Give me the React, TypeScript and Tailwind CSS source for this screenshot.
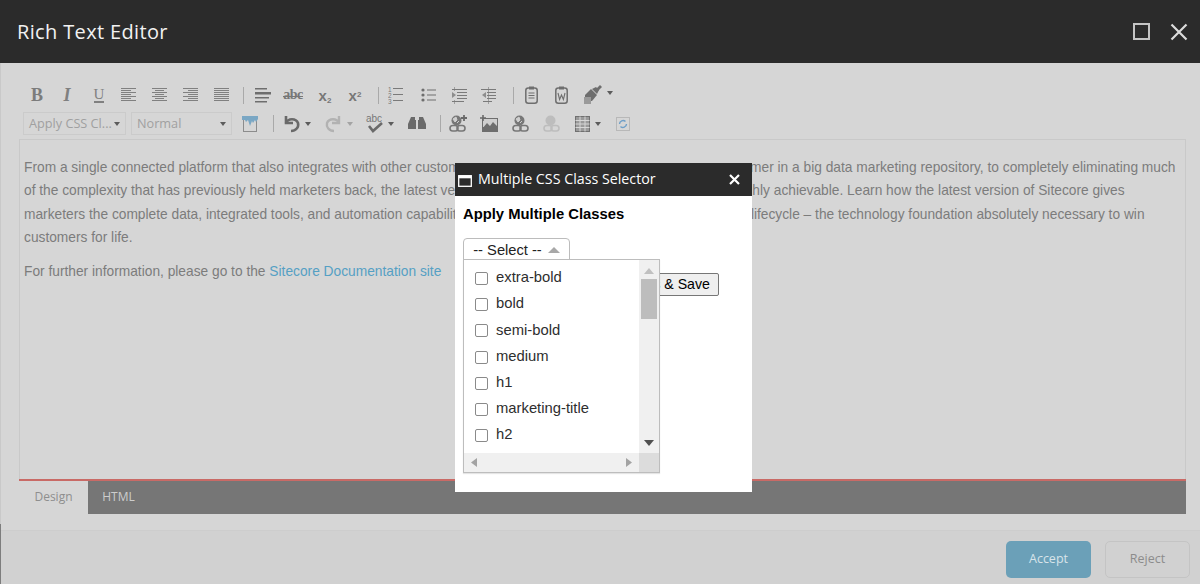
const body = "font-['Liberation_Sans',Arial,sans-serif]";

function Caret({ className = '' }: { className?: string }) {
  return (
    <svg width="6" height="4" viewBox="0 0 6 4" className={`shrink-0 ${className}`}>
      <path d="M0 0h6L3 4z" fill="#5c5c5c" />
    </svg>
  );
}

function Lines({ rows }: { rows: [number, number][] }) {
  return (
    <svg width="15" height="14" viewBox="0 0 15 14">
      {rows.map(([x, w], i) => (
        <rect key={i} x={x} y={i * 2} width={w} height="1" fill="#808080" />
      ))}
    </svg>
  );
}

function Sep({ className = '' }: { className?: string }) {
  return <span className={`h-[17px] w-px shrink-0 bg-[#a9a9a9] ${className}`} />;
}

function Btn({ className, children }: { className: string; children: React.ReactNode }) {
  return <span className={`flex h-[22px] shrink-0 items-center justify-center ${className}`}>{children}</span>;
}

const alignLeft: [number, number][] = [[0,15],[0,10],[0,15],[0,10],[0,15],[0,10],[0,15]];
const alignCenter: [number, number][] = [[0,15],[3,9],[0,15],[3,9],[0,15],[3,9],[0,15]];
const alignRight: [number, number][] = [[0,15],[5,10],[0,15],[5,10],[0,15],[5,10],[0,15]];
const justify: [number, number][] = [[0,15],[0,15],[0,15],[0,15],[0,15],[0,15],[0,15]];

function ToolbarTop() {
  return (
    <div className="flex h-[22px] items-center pl-[21px]">
      <Btn className="w-[30px]"><span className="font-['Liberation_Serif',serif] text-[18px] font-bold leading-none text-[#7c7c7c]">B</span></Btn>
      <Btn className="w-[30px]"><span className="font-['Liberation_Serif',serif] text-[18px] font-bold italic leading-none text-[#808080]">I</span></Btn>
      <Btn className="w-[34px]"><span className="border-b-2 border-[#808080] font-['Liberation_Serif',serif] text-[15px] leading-[14px] text-[#808080]">U</span></Btn>
      <Btn className="w-[24px]"><Lines rows={alignLeft} /></Btn>
      <Btn className="w-[38px]"><Lines rows={alignCenter} /></Btn>
      <Btn className="w-[24px]"><Lines rows={alignRight} /></Btn>
      <Btn className="w-[38px]"><Lines rows={justify} /></Btn>
      <Sep className="ml-[3px]" />
      <Btn className="ml-[3px] w-[32px]">
        <svg width="16" height="16" viewBox="0 0 16 16" fill="#6e6e6e">
          <rect x="0" y="1" width="12" height="1.5" />
          <rect x="0" y="5" width="16" height="2.5" />
          <rect x="0" y="10" width="14" height="1.5" />
          <rect x="0" y="14" width="12" height="1.5" />
        </svg>
      </Btn>
      <Btn className="w-[28px]">
        <span className="relative font-['Liberation_Serif',serif] text-[14px] font-bold leading-none tracking-[-0.5px] text-[#777]">
          abc
          <span className="absolute left-0 right-0 top-[8px] h-px bg-[#777]" />
        </span>
      </Btn>
      <Btn className="w-[36px]">
        <span className={`${body} text-[15px] font-bold leading-none text-[#777]`}>x<sub className="text-[8px]">2</sub></span>
      </Btn>
      <Btn className="w-[24px]">
        <span className={`${body} text-[15px] font-bold leading-none text-[#777]`}>x<sup className="text-[8px]">2</sup></span>
      </Btn>
      <Sep className="ml-[11px]" />
      <Btn className="w-[34px]">
        <svg width="16" height="18" viewBox="0 0 16 18" fill="#7a7a7a">
          <text x="0" y="6" fontSize="6.5" fontFamily="Liberation Sans">1</text>
          <text x="0" y="12" fontSize="6.5" fontFamily="Liberation Sans">2</text>
          <text x="0" y="18" fontSize="6.5" fontFamily="Liberation Sans">3</text>
          <rect x="5" y="2" width="10" height="1" />
          <rect x="5" y="8" width="10" height="1" />
          <rect x="5" y="14" width="10" height="1" />
        </svg>
      </Btn>
      <Btn className="w-[30px]">
        <svg width="15" height="14" viewBox="0 0 15 14" fill="#6e6e6e">
          <circle cx="2" cy="2" r="1.6" />
          <circle cx="2" cy="7" r="1.6" />
          <circle cx="2" cy="12" r="1.6" />
          <rect x="6" y="1.5" width="9" height="1" />
          <rect x="6" y="6.5" width="9" height="1" />
          <rect x="6" y="11.5" width="9" height="1" />
        </svg>
      </Btn>
      <Btn className="w-[32px]">
        <svg width="16" height="17" viewBox="0 0 16 17" fill="#7a7a7a">
          <path d="M1 5l4 3-4 3z" opacity="0.8" />
          <rect x="3" y="0" width="1" height="4" opacity="0.6" />
          <rect x="3" y="13" width="1" height="4" opacity="0.6" />
          <rect x="1" y="2" width="15" height="1" />
          <rect x="6" y="5" width="10" height="1" />
          <rect x="6" y="8" width="10" height="1" />
          <rect x="6" y="11" width="10" height="1" />
          <rect x="1" y="14" width="12" height="1" />
        </svg>
      </Btn>
      <Btn className="w-[28px]">
        <svg width="16" height="17" viewBox="0 0 16 17" fill="#7a7a7a">
          <path d="M5 5L1 8l4 3z" opacity="0.8" />
          <rect x="7" y="0" width="1" height="17" opacity="0.6" />
          <rect x="0" y="2" width="15" height="1" />
          <rect x="6" y="5" width="9" height="1" />
          <rect x="6" y="8" width="9" height="1" />
          <rect x="6" y="11" width="9" height="1" />
          <rect x="2" y="14" width="9" height="1" />
        </svg>
      </Btn>
      <Sep className="ml-[10px]" />
      <Btn className="w-[34px]">
        <svg width="13" height="18" viewBox="0 0 13 18" fill="none" stroke="#6e6e6e">
          <rect x="0.8" y="2" width="11.4" height="15.2" rx="2.5" strokeWidth="1.5" />
          <rect x="4" y="0.5" width="5" height="3" fill="#6e6e6e" stroke="none" />
          <path d="M3.5 7h6M3.5 9.5h6M3.5 12h6" strokeWidth="1" />
        </svg>
      </Btn>
      <Btn className="w-[26px]">
        <svg width="13" height="18" viewBox="0 0 13 18" fill="none" stroke="#6e6e6e">
          <rect x="0.8" y="2" width="11.4" height="15.2" rx="2.5" strokeWidth="1.5" />
          <rect x="4" y="0.5" width="5" height="3" fill="#6e6e6e" stroke="none" />
          <path d="M3 7l1.6 6.5L6.5 9l1.9 4.5L10 7" strokeWidth="1.1" />
        </svg>
      </Btn>
      <span className="ml-[7px] flex items-center">
        <svg width="22" height="20" viewBox="0 0 22 20" className="shrink-0">
          <path d="M4 10l6-6 6 6-5 6H4z" fill="#6e6e6e" />
          <path d="M11 4l4-2 3 3-2 4z" fill="#6e6e6e" />
          <path d="M15 4l4-4 2 2-4 4z" fill="#6e6e6e" />
          <path d="M3 12h7v7H3z" fill="#9a9a9a" />
        </svg>
        <Caret className="-mt-1 ml-[4px]" />
      </span>
    </div>
  );
}

function Combo({ className, label }: { className: string; label: string }) {
  return (
    <span className={`flex h-[23px] shrink-0 items-center justify-between border border-[#cbcbcb] pl-[5px] pr-[5px] font-['Open_Sans',sans-serif] text-[12.7px] text-[#a0a0a0] ${className}`}>
      <span className="whitespace-nowrap">{label}</span>
      <Caret />
    </span>
  );
}

function Globe({ color, accent }: { color: string; accent?: boolean }) {
  return (
    <>
      <circle cx="7.5" cy="5.5" r="5" fill={color} />
      {accent && <path d="M4 4l3-2 1 3-2 2zM8 8l2-2" fill="#cfcfcf" stroke="#cfcfcf" />}
      <rect x="1" y="10.5" width="8" height="5.5" rx="2.7" fill="#d6d6d6" stroke={color} strokeWidth="1.6" />
      <rect x="8" y="10.5" width="8" height="5.5" rx="2.7" fill="none" stroke={color} strokeWidth="1.6" />
    </>
  );
}

function ToolbarBottom() {
  return (
    <div className="mt-[6px] flex h-[23px] items-center pl-[22px]">
      <Combo className="w-[103px]" label="Apply CSS Cl..." />
      <Combo className="ml-[5px] w-[101px]" label="Normal" />
      <Btn className="w-[36px]">
        <svg width="16" height="16" viewBox="0 0 16 16">
          <rect x="1.5" y="2.5" width="13" height="13" fill="none" stroke="#8c8c8c" />
          <path d="M0 0h16v3l-2 3-1-2-2 3-1-2-2 5-2-6-2 2-1-2-3 0z" fill="#7aa7c4" />
        </svg>
      </Btn>
      <Sep className="ml-[5px]" />
      <svg width="18" height="18" viewBox="0 0 18 18" fill="none" stroke="#6a6a6a" strokeWidth="2.6" className="ml-[9px] shrink-0">
        <path d="M3 1v7h7" />
        <path d="M3 8c2-5 10-5 12 0 1 4-2 8-7 8" />
      </svg>
      <Caret className="ml-[4px]" />
      <svg width="18" height="18" viewBox="0 0 18 18" fill="none" stroke="#b2b2b2" strokeWidth="2.4" className="ml-[13px] shrink-0">
        <path d="M15 1v7H8" />
        <path d="M15 8C13 3 5 3 3 8c-1 4 2 8 7 8" />
      </svg>
      <Caret className="ml-[5px] opacity-40" />
      <svg width="20" height="20" viewBox="0 0 20 20" className="ml-[12px] shrink-0">
        <text x="1" y="8" fontSize="10" fontFamily="Liberation Sans" fill="#777">abc</text>
        <path d="M4 12l4 5 9-8" fill="none" stroke="#6a6a6a" strokeWidth="2.6" />
      </svg>
      <Caret className="ml-[3px]" />
      <svg width="18" height="15" viewBox="0 0 18 15" fill="#6a6a6a" className="ml-[14px] shrink-0">
        <path d="M3 1h4v3h1v9H0V8z" />
        <path d="M15 1h-4v3h-1v9h8V8z" />
      </svg>
      <Sep className="ml-[14px]" />
      <svg width="18" height="18" viewBox="0 0 18 18" className="ml-[8px] shrink-0">
        <Globe color="#777" accent />
        <path d="M12 3h6M15 0v6" stroke="#6a6a6a" strokeWidth="1.8" />
      </svg>
      <svg width="18" height="17" viewBox="0 0 18 17" className="ml-[13px] shrink-0">
        <rect x="2" y="3" width="16" height="14" fill="#6e6e6e" />
        <rect x="3" y="4" width="14" height="8" fill="#cfcfcf" />
        <path d="M2 14l5-6 3 3 3-4 5 5v5H2z" fill="#6e6e6e" />
        <path d="M0 3h6M3 0v6" stroke="#6a6a6a" strokeWidth="1.6" />
      </svg>
      <svg width="18" height="18" viewBox="0 0 18 18" className="ml-[14px] shrink-0">
        <Globe color="#777" accent />
      </svg>
      <svg width="18" height="18" viewBox="0 0 18 18" className="ml-[13px] shrink-0">
        <Globe color="#bdbdbd" />
      </svg>
      <svg width="15" height="16" viewBox="0 0 15 16" fill="none" stroke="#707070" className="ml-[14px] shrink-0">
        <rect x="0.5" y="0.5" width="14" height="15" fill="#9a9a9a" />
        <path d="M.5 4.5h14M.5 8h14M.5 11.5h14M5 .5v15M10 .5v15" stroke="#d6d6d6" />
      </svg>
      <Caret className="ml-[5px]" />
      <svg width="14" height="14" viewBox="0 0 14 14" fill="none" className="ml-[15px] shrink-0">
        <rect x="0.5" y="0.5" width="13" height="13" stroke="#9a9a9a" strokeDasharray="1 1" />
        <path d="M3.5 7a3.5 3.5 0 0 1 6-2.4M10.5 7a3.5 3.5 0 0 1-6 2.4" stroke="#6f9fc8" strokeWidth="1.4" />
      </svg>
    </div>
  );
}

const options = ['extra-bold', 'bold', 'semi-bold', 'medium', 'h1', 'marketing-title', 'h2'];

function ClassDialog() {
  return (
    <div className={`absolute left-[455px] top-[163px] h-[329px] w-[297px] bg-white shadow-[0_-3px_0_#d6d6d6] ${body}`}>
      <div className="flex h-[33px] items-center bg-[#2b2b2b] pb-[1px] pl-[3px] pr-[12px] text-white">
        <svg width="14" height="12" viewBox="0 0 14 12" className="mt-[3px] shrink-0" fill="none">
          <rect x="0.7" y="0.7" width="12.6" height="10.6" stroke="white" strokeWidth="1.3" />
          <rect x="0.7" y="0.7" width="12.6" height="2.6" fill="white" />
        </svg>
        <span className="ml-[6px] flex-1 font-['Open_Sans',sans-serif] text-[14.25px]">Multiple CSS Class Selector</span>
        <svg width="11" height="11" viewBox="0 0 11 11" stroke="white" strokeWidth="2.2">
          <path d="M1 1l9 9M10 1l-9 9" />
        </svg>
      </div>
      <p className="mt-[9px] pl-[8px] text-[14.8px] font-bold leading-[18px] text-black">Apply Multiple Classes</p>
      <div className="relative mt-[15px] pl-[8px]">
        <div className="flex h-[23px] w-[107px] items-start justify-center gap-[6px] rounded-t-[4px] border border-[#bcbcbc] pt-[1px] text-[14.7px] leading-[20px] text-[#222]">
          -- Select --
          <svg width="12" height="6" viewBox="0 0 12 6" className="mt-[7px]">
            <path d="M0 6L6 0l6 6z" fill="#a8a8a8" />
          </svg>
        </div>
        <button className="absolute left-[187px] top-[35px] flex h-[23px] w-[77px] justify-end whitespace-nowrap rounded-[2px] border border-[#767676] bg-[#efefef] pr-[8px] text-[14.2px] leading-[20px] text-black">
          Options &amp; Save
        </button>
        <div className="absolute left-[8px] top-[21px] flex h-[214px] w-[197px] flex-col border border-[#bdbdbd] bg-white shadow-[0_1px_1px_rgba(0,0,0,0.1)]">
          <div className="flex min-h-0 flex-1">
            <ul className="flex-1 pl-[11px] pt-[5px]">
              {options.map((o) => (
                <li key={o} className="flex h-[26.2px] items-center text-[14.8px] leading-none text-[#2e2e2e]">
                  <span className="mt-[1px] h-[13px] w-[13px] rounded-[2px] border border-[#8a8a8a] bg-white" />
                  <span className="-mt-[1px] ml-[8px]">{o}</span>
                </li>
              ))}
            </ul>
            <div className="flex w-[20px] flex-col items-center bg-[#f0f0f0]">
              <svg width="10" height="6" viewBox="0 0 10 6" className="mt-[8px]"><path d="M0 6l5-6 5 6z" fill="#c0c0c0" /></svg>
              <div className="mt-[5px] h-[40px] w-[16px] bg-[#bdbdbd]" />
              <svg width="10" height="6" viewBox="0 0 10 6" className="mb-[7px] mt-auto"><path d="M0 0l5 6 5-6z" fill="#505050" /></svg>
            </div>
          </div>
          <div className="flex h-[19px]">
            <div className="flex flex-1 items-center justify-between bg-[#f0f0f0] px-[7px]">
              <svg width="6" height="9" viewBox="0 0 6 9"><path d="M6 0L0 4.5 6 9z" fill="#a3a3a3" /></svg>
              <svg width="6" height="9" viewBox="0 0 6 9"><path d="M0 0l6 4.5L0 9z" fill="#a3a3a3" /></svg>
            </div>
            <div className="w-[20px] bg-[#dcdcdc]" />
          </div>
        </div>
      </div>
    </div>
  );
}

export default function App() {
  return (
    <div className="relative flex h-[584px] w-[1200px] flex-col overflow-hidden bg-[#d6d6d6]">
      <header className="flex h-[63px] shrink-0 items-center bg-[#2b2b2b] pl-[17px] pr-[12px] text-white">
        <h1 className="flex-1 font-['Open_Sans',sans-serif] text-[20px] font-normal tracking-[0.35px] text-[#f2f2f2]">Rich Text Editor</h1>
        <span className="h-[17px] w-[17px] border-2 border-[#c4c4c4]" />
        <svg width="18" height="18" viewBox="0 0 18 18" className="ml-[20px]" stroke="#dcdcdc" strokeWidth="2.2">
          <path d="M1.5 1.5l15 15M16.5 1.5l-15 15" />
        </svg>
      </header>
      <main className="flex flex-1 flex-col border-l border-[#c9c9c9] pt-[21px]">
        <ToolbarTop />
        <ToolbarBottom />
        <div className="ml-[18px] mr-[14px] mt-[4px] h-[340px] border border-b-0 border-[#c9c9c9] px-[4px] pt-[16px]">
          <div className={`${body} text-[13.76px] leading-[23.4px] text-[#7c7c7c]`}>
            <p className="whitespace-nowrap">
              From a single connected platform that also integrates with other customer-facing platforms, to a single view of the customer in a big data marketing repository, to completely eliminating much<br />
              of the complexity that has previously held marketers back, the latest version of Sitecore makes customer experience highly achievable. Learn how the latest version of Sitecore gives<br />
              marketers the complete data, integrated tools, and automation capabilities to engage customers throughout an iterative lifecycle – the technology foundation absolutely necessary to win<br />
              customers for life.
            </p>
            <p className="mt-[10px]">
              For further information, please go to the <span className="text-[#55a0c4]">Sitecore Documentation site</span>
            </p>
          </div>
        </div>
        <div className="ml-[18px] mr-[14px] h-[2px] bg-[#c96a66]" />
        <div className="ml-[18px] mr-[14px] flex h-[33px] bg-[#767676] pb-[2px]">
          <span className="-mb-[2px] flex w-[69px] items-center justify-center bg-[#d6d6d6] pb-[2px] font-['Open_Sans',sans-serif] text-[12px] text-[#8e8e8e]">Design</span>
          <span className="flex w-[50px] items-center justify-center pl-[11px] font-['Open_Sans',sans-serif] text-[12px] text-[#cdcdcd]">HTML</span>
        </div>
        <footer className="mt-[16px] flex h-[54px] shrink-0 items-start justify-end gap-[14px] border-t border-[#cdcdcd] bg-[#d1d1d1] pr-[10px] pt-[10px] font-['Open_Sans',sans-serif] text-[12.5px]">
          <span className="flex h-[37px] w-[85px] items-center justify-center rounded-[5px] bg-[#6ba0b8] text-[#d8e4ea]">Accept</span>
          <span className="flex h-[37px] w-[85px] items-center justify-center rounded-[5px] border border-[#c4c4c4] text-[#8c8c8c]">Reject</span>
        </footer>
      </main>
      <span className="absolute left-0 top-[524px] h-[60px] w-px bg-[#7d7d7d]" />
      <ClassDialog />
    </div>
  );
}
